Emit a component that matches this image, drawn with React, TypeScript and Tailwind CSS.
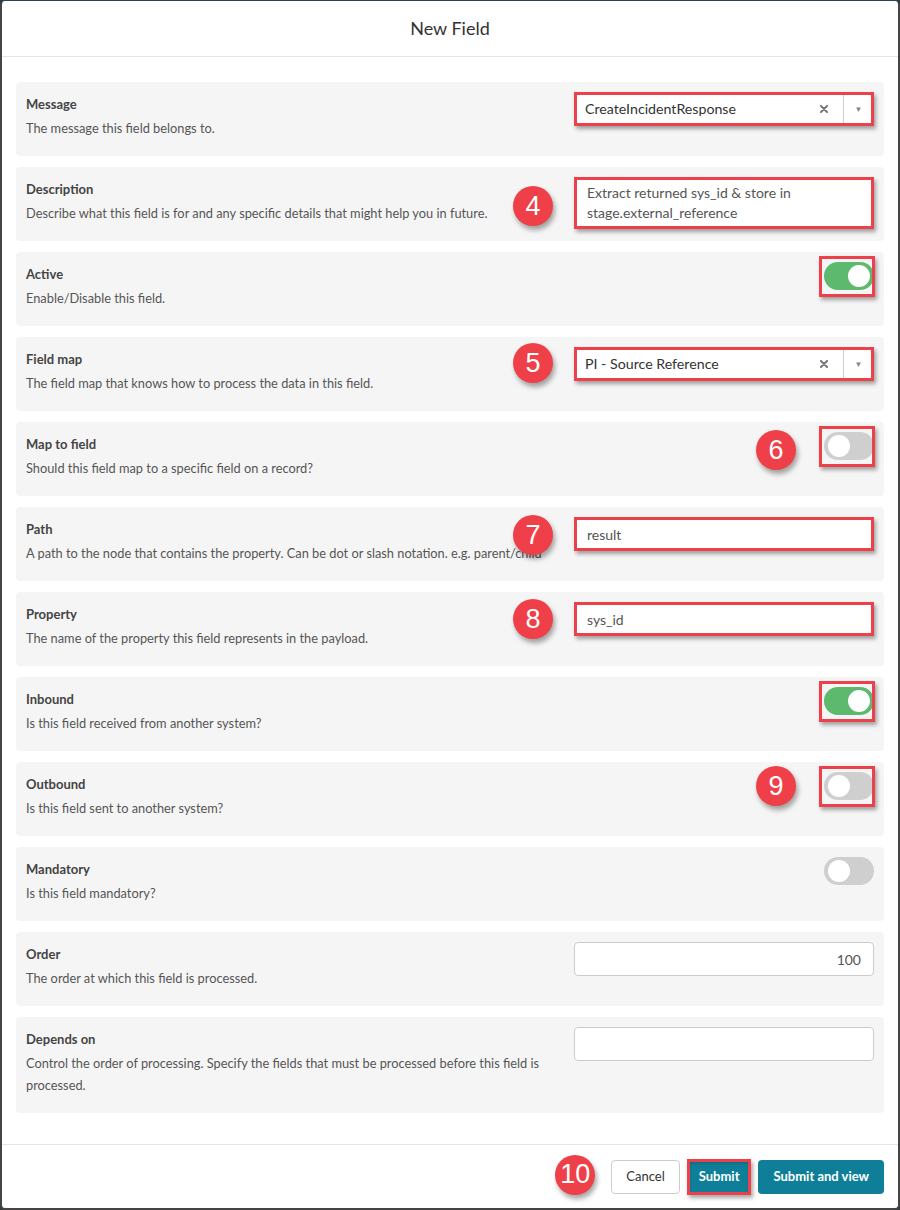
import React from "react"

type Row = {
  label: string
  desc: string
  control: React.ReactNode
  badge?: { n: string; cls: string }
}

function Mark() {
  return (
    <span className="pointer-events-none absolute -inset-[1px] border-[3px] border-[#ec414a] shadow-[2px_3px_4px_rgba(0,0,0,0.35)]" />
  )
}

function Badge({ n, cls }: { n: string; cls: string }) {
  return (
    <div
      className={`absolute flex h-[40px] w-[40px] items-center justify-center rounded-full bg-[#ef3f48] text-[27px] leading-none text-white shadow-[2px_4px_5px_rgba(0,0,0,0.35)] font-['Liberation_Sans',sans-serif] ${cls}`}
    >
      {n}
    </div>
  )
}

function Select({ value }: { value: string }) {
  return (
    <div className="relative flex h-[34px] w-full items-center border border-[#ccc] bg-white">
      <span className="flex-1 pl-[10px] text-[14.2px] text-[#333]">{value}</span>
      <span className="mr-[9px] flex w-[20px] justify-center">
        <svg width="8" height="8" viewBox="0 0 8 8">
          <path d="M1 1L7 7M7 1L1 7" stroke="#777" strokeWidth="2" strokeLinecap="round" />
        </svg>
      </span>
      <span className="h-[28px] w-px bg-[#ccc]" />
      <span className="w-[29px] text-center text-[8px] text-[#888]">▼</span>
      <Mark />
    </div>
  )
}

function TextInput({ value, marked, right }: { value?: string; marked?: boolean; right?: boolean }) {
  return (
    <div
      className={`relative flex h-[34px] w-full items-center rounded-[4px] border border-[#ccc] bg-white px-[12px] text-[14px] text-[#555] ${right ? "justify-end" : ""}`}
    >
      {value}
      {marked && <Mark />}
    </div>
  )
}

function Toggle({ on, marked }: { on?: boolean; marked?: boolean }) {
  return (
    <div className="relative ml-auto h-[28px] w-[50px]">
      <div
        className={`flex h-[28px] w-[50px] items-center rounded-full px-[4px] ${on ? "justify-end bg-[#5cb96d]" : "justify-start bg-[#cfcfcf]"}`}
      >
        <span className="h-[22px] w-[22px] rounded-full bg-white" />
      </div>
      {marked && (
        <span className="pointer-events-none absolute -left-[5px] -top-[6px] -right-[1px] -bottom-[7px] border-[3px] border-[#ec414a] shadow-[2px_3px_4px_rgba(0,0,0,0.35)]" />
      )}
    </div>
  )
}

const rows: Row[] = [
  {
    label: "Message",
    desc: "The message this field belongs to.",
    control: <Select value="CreateIncidentResponse" />,
  },
  {
    label: "Description",
    desc: "Describe what this field is for and any specific details that might help you in future.",
    control: (
      <div className="relative h-[52px] w-full border border-[#ccc] bg-white px-[12px] py-[5px] text-[14px] leading-[20px] text-[#555]">
        Extract returned sys_id &amp; store in
        <br />
        stage.external_reference
        <Mark />
      </div>
    ),
    badge: { n: "4", cls: "left-[497px] top-[19px]" },
  },
  {
    label: "Active",
    desc: "Enable/Disable this field.",
    control: <Toggle on marked />,
  },
  {
    label: "Field map",
    desc: "The field map that knows how to process the data in this field.",
    control: <Select value="PI - Source Reference" />,
    badge: { n: "5", cls: "left-[497px] top-[6px]" },
  },
  {
    label: "Map to field",
    desc: "Should this field map to a specific field on a record?",
    control: <Toggle marked />,
    badge: { n: "6", cls: "left-[740px] top-[8px]" },
  },
  {
    label: "Path",
    desc: "A path to the node that contains the property. Can be dot or slash notation. e.g. parent/child",
    control: <TextInput value="result" marked />,
    badge: { n: "7", cls: "left-[497px] top-[8px]" },
  },
  {
    label: "Property",
    desc: "The name of the property this field represents in the payload.",
    control: <TextInput value="sys_id" marked />,
    badge: { n: "8", cls: "left-[497px] top-[7px]" },
  },
  {
    label: "Inbound",
    desc: "Is this field received from another system?",
    control: <Toggle on marked />,
  },
  {
    label: "Outbound",
    desc: "Is this field sent to another system?",
    control: <Toggle marked />,
    badge: { n: "9", cls: "left-[740px] top-[4px]" },
  },
  {
    label: "Mandatory",
    desc: "Is this field mandatory?",
    control: <Toggle />,
  },
  {
    label: "Order",
    desc: "The order at which this field is processed.",
    control: <TextInput value="100" right />,
  },
  {
    label: "Depends on",
    desc: "Control the order of processing. Specify the fields that must be processed before this field is processed.",
    control: <TextInput />,
  },
]

export default function App() {
  return (
    <div className="h-[1210px] w-[900px] bg-[#2f3a3d] font-['Lato',sans-serif]">
      <div className="flex h-full flex-col overflow-hidden rounded-[5px] border-x-[2px] border-b-[2px] border-t border-x-[#444] border-b-[#444] border-t-[#21464f] bg-white">
        <header className="flex h-[56px] shrink-0 items-center justify-center border-b border-[#e5e5e5] text-[18px] text-[#333]">
          New Field
        </header>

        <main className="flex flex-1 flex-col gap-[11px] px-[14px] pt-[25px]">
          {rows.map((r) => (
            <div
              key={r.label}
              className="relative flex items-start justify-between rounded-[4px] bg-[#f5f5f5] px-[10px] pt-[10px]"
            >
              <div className="w-[528px] pt-[2px] pb-[17px]">
                <div className="text-[13px] font-bold leading-[20px] text-[#444]">{r.label}</div>
                <div className="mt-[3px] text-[12.8px] leading-[22px] text-[#555]">{r.desc}</div>
              </div>
              <div className="w-[300px]">{r.control}</div>
              {r.badge && <Badge n={r.badge.n} cls={r.badge.cls} />}
            </div>
          ))}
        </main>

        <footer className="flex h-[64px] shrink-0 items-center justify-end gap-[8px] border-t border-[#e5e5e5] pr-[14px]">
          <div className="relative mr-[8px] h-[40px] w-[40px]">
            <Badge n="10" cls="left-0 top-[-2px] text-[25px]" />
          </div>
          <button className="h-[34px] rounded-[4px] border border-[#ccc] bg-white px-[14px] text-[13px] text-[#333]">
            Cancel
          </button>
          <button className="relative h-[34px] rounded-[3px] bg-[#0f7f99] px-[11px] text-[13px] font-bold text-white shadow-[inset_0_2px_4px_rgba(0,0,0,0.3)]">
            Submit
            <Mark />
          </button>
          <button className="h-[34px] rounded-[4px] bg-[#0f7f99] px-[15px] text-[13px] font-bold text-white">
            Submit and view
          </button>
        </footer>
      </div>
    </div>
  )
}
